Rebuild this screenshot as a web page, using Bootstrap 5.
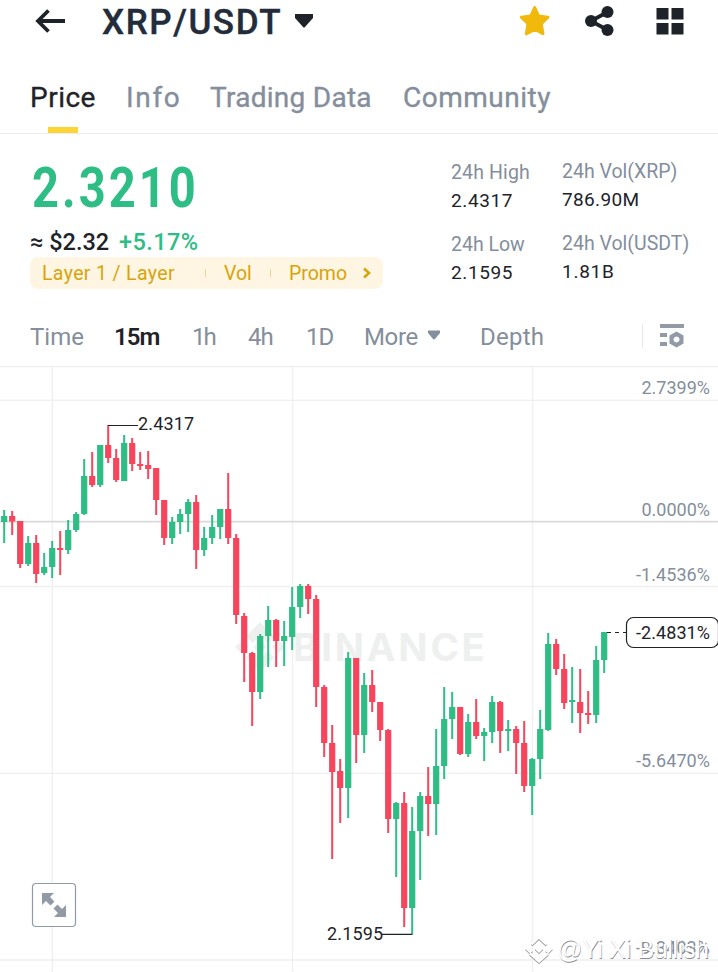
<!DOCTYPE html>
<html lang="en">
<head>
<meta charset="utf-8">
<meta name="viewport" content="width=device-width, initial-scale=1">
<title>XRP/USDT</title>
<link href="https://cdn.jsdelivr.net/npm/bootstrap@5.3.0/dist/css/bootstrap.min.css" rel="stylesheet">
<style>
body{font-family:Roboto,"Liberation Sans",sans-serif;color:#1e2329;background:#fff;overflow:hidden;width:718px}
svg{display:block}
.t{white-space:nowrap;flex:none}
.topbar{height:44px;padding-left:35px}
.pair{font-size:35px;font-weight:500;line-height:46px;width:192px;margin-left:36px;color:#232c3a;-webkit-text-stroke:.4px #232c3a}
.tabs{height:90px;padding-left:30px;border-bottom:1px solid #eaecef;font-size:28px;line-height:34px;color:#848e9c;padding-top:37px}
.tabs .t{-webkit-text-stroke:.35px}
.w1{width:96px}.w2{width:84px}.w3{width:193px}
.tabs .w1{color:#1e2329;position:relative}
.tabs .w1:after{content:"";position:absolute;left:18px;top:46px;width:30px;height:6px;background:#fcd535}
.ticker{height:174px;padding-left:30px}
.lcol{width:421px;padding-top:24px}
.last{font-size:56px;line-height:60px;font-weight:700;color:#2ebd85;padding-left:2px}
.last span{display:inline-block;transform:scaleX(.84);transform-origin:0 50%}
.sub{font-size:23.5px;line-height:30px;margin-top:9px;font-weight:500}
.up{color:#2ebd85}
.pill{width:353px;height:32px;border-radius:8px;background:#fef6e2;color:#d9a30b;font-size:19.5px;padding-left:12px}
.pill span{position:relative;top:1px}
.tick{width:1px;height:8px;background:#eed58d}
.stat{font-size:19.5px;line-height:28px}
.stat .k{color:#848e9c}
.stat .v{font-size:19px}
.c1{width:111px;padding-top:25px}.c2{padding-top:23.500px}
.ivals{height:58px;padding-left:30px;font-size:24px;color:#848e9c}
.ivals .on{font-weight:600;color:#1e2329;margin-left:-1px;margin-right:1px}
.vr1{width:1px;height:24px;background:#e3e6ea;margin-top:-3px}
.gear{margin-top:-4px}
</style>
<script src="https://cdn.jsdelivr.net/npm/bootstrap@5.3.0/dist/js/bootstrap.bundle.min.js"></script>
</head>
<body>
<header class="topbar d-flex align-items-start">
  <svg class="flex-shrink-0" width="31" height="44"><path d="M13.500 10.500 3 21 13.500 31.500M2.500 21H30" fill="none" stroke="#1e2329" stroke-width="3.800"/></svg>
  <div class="pair t"><span>XRP/USDT</span></div>
  <svg class="flex-shrink-0" width="21" height="44"><path d="M1 14H19V18L10.500 27.500H9.500L1 18Z" fill="#1e2329"/></svg>
  <svg class="flex-shrink-0" width="403" height="44">
    <path d="M219.800 7.500 223.600 16 233 17.200 226.300 23.800 228 33.800 219.800 29.300 211.300 33.800 213 23.800 206.300 17.200 215.800 16Z" fill="#f0b90b" stroke="#f0b90b" stroke-width="3" stroke-linejoin="round"/>
    <g fill="#1e2329"><path d="M292.500 12 276 21 292.500 30" fill="none" stroke="#1e2329" stroke-width="3.800"/><circle cx="292.500" cy="12" r="6"/><circle cx="276" cy="21" r="6"/><circle cx="292.500" cy="30" r="6"/>
    <path d="M341.500 8h12v11.500h-12zM356.500 8h12v11.500h-12zM341.500 23h12v11.500h-12zM356.500 23h12v11.500h-12z"/></g>
  </svg>
</header>
<nav class="tabs d-flex">
  <div class="t w1"><span>Price</span></div><div class="t w2"><span>Info</span></div><div class="t w3"><span>Trading Data</span></div><div class="t"><span>Community</span></div>
</nav>
<section class="ticker d-flex">
  <div class="lcol flex-shrink-0">
    <div class="last"><span>2.3210</span></div>
    <div class="sub d-flex"><div class="t" style="width:89px"><span>≈ $2.32</span></div><div class="t up"><span>+5.17%</span></div></div>
    <div class="pill d-flex align-items-center">
      <div class="t" style="width:163px"><span>Layer 1 / Layer</span></div><div class="tick"></div>
      <div class="t" style="width:64px;padding-left:18px"><span>Vol</span></div><div class="tick"></div>
      <div class="t" style="width:91px;padding-left:18px"><span>Promo</span></div>
      <svg width="10" height="12"><path d="M2 1.500 7 6 2 10.500" fill="none" stroke="#d9a30b" stroke-width="2.600"/></svg>
    </div>
  </div>
  <div class="stat c1 flex-shrink-0">
    <div class="k"><span>24h High</span></div><div class="v"><span>2.4317</span></div>
    <div class="k mt-3"><span>24h Low</span></div><div class="v"><span>2.1595</span></div>
  </div>
  <div class="stat c2 t">
    <div class="k"><span>24h Vol(XRP)</span></div><div class="v"><span>786.90M</span></div>
    <div class="k mt-3"><span>24h Vol(USDT)</span></div><div class="v"><span>1.81B</span></div>
  </div>
</section>
<nav class="ivals d-flex align-items-center">
  <div class="t" style="width:85px"><span>Time</span></div><div class="t on" style="width:77px"><span>15m</span></div><div class="t" style="width:56px"><span>1h</span></div><div class="t" style="width:58px"><span>4h</span></div><div class="t" style="width:58px"><span>1D</span></div><div class="t" style="width:64px"><span>More</span></div>
  <svg class="flex-shrink-0" width="52" height="16"><path d="M0 1.500H12V4L6.500 10.500H5.500L0 4Z" fill="#848e9c"/></svg>
  <div class="t" style="width:162px"><span>Depth</span></div><div class="vr1"></div>
  <svg class="gear flex-shrink-0 ms-3" width="28" height="26"><g fill="#929aa5"><path d="M1 2h24v4H1zM1 11h7v4H1zM1 20h7v4H1z"/><path fill-rule="evenodd" d="M17.500 9.500 24.500 13.500V21.500L17.500 25.500 10.500 21.500V13.500ZM17.500 14.500a3 3 0 1 0 .01 0Z"/></g></svg>
</nav>
<svg id="chart" width="718" height="606" viewBox="0 366 718 606" font-family="Roboto,sans-serif" font-size="18">
  <g stroke="#eeeff1" stroke-width="1.300"><path d="M0 366.500H718M0 400.300H718M0 586.500H718M0 773.300H718M0 960H718M52.300 366V972M292.500 366V972M532.500 366V972"/></g>
  <path d="M0 521.700H718" stroke="#d9dade" stroke-width="1.800"/>
  <g fill="#eef0f0">
    <path d="M260 622 274 636.500 267.500 643 260 635.500 252.500 643 246 636.500ZM241.500 640.500 248 647 241.500 653.500 235 647ZM260 640.500 266.500 647 260 653.500 253.500 647ZM278.500 640.500 285 647 278.500 653.500 272 647ZM246 657.500 252.500 651 260 658.500 267.500 651 274 657.500 260 672Z"/>
    <text x="293" y="661" font-family="Inter,sans-serif" font-weight="700" font-size="38.500" textLength="192">BINANCE</text>
  </g>
  <g id="candles"></g>
  <g fill="#848e9c">
    <text x="641.500" y="394" textLength="68.500">2.7399%</text><text x="641.500" y="516" textLength="68.500">0.0000%</text><text x="636" y="581" textLength="74">-1.4536%</text><text x="636" y="767" textLength="74">-5.6470%</text><text x="636" y="954" textLength="74">-9.3403%</text>
  </g>
  <g fill="none" stroke="#1e2329" stroke-width="1.200"><path d="M108 425.500H138M382 934.400H412.500"/><path d="M607 632.500H626" stroke-dasharray="4 4"/><rect x="626.500" y="617.500" width="92" height="30" rx="7" fill="#fff"/></g>
  <g fill="#1e2329"><text x="138" y="430" textLength="56">2.4317</text><text x="327" y="940" textLength="56">2.1595</text><text x="636" y="639" textLength="74">-2.4831%</text></g>
  <rect x="32.500" y="883.500" width="43" height="43" rx="3.500" fill="#fff" stroke="#929aa5" stroke-width="1.200"/>
  <path d="M42 893H54L50 897 54.500 901.500 50.500 905.500 46 901 42 905ZM66 917H54L58 913 53.500 908.500 57.500 904.500 62 909 66 905Z" fill="#929aa5"/>
  <g id="sig">
    <g fill="none" stroke="#a0a3a7" stroke-width="2.600"><path d="M531.500 945.500 539 938.500 546.500 945.500M526 949 530 953 532 951M552 949 548 953 546 951M535.500 949 539 952.500 542.500 949M530 954.500 539 962.500 548 954.500"/></g>
    <g fill="none" stroke="#fff" stroke-width="2.200"><path d="M531.500 944.500 539 937.500 546.500 944.500M526 948 530 952 532 950M552 948 548 952 546 950M535.500 948 539 951.500 542.500 948M530 953.500 539 961.500 548 953.500"/></g>
    <g font-family="Liberation Sans,sans-serif" font-size="25"><text x="557.600" y="958.700" textLength="152" fill="#8b8e93">@Yi Xi Bullish</text><text x="557" y="958" textLength="152" fill="#fff">@Yi Xi Bullish</text></g>
  </g>
</svg>
<script>
// direction, high, body top, body bottom, low
const rows=`g510,516,522,543 r511,516,521.5,535 r521,521,564,568 g536,543,564,566 r535,543,574,583 g553,567,573,575 g541,548,567,578 r531,548,550,575 g520,530,550,554 g512,514,530,532 g459,476,514,515 r452,476,485,487 g445,445,485,487 r425,445,458,463 r449,458,480,482 g435,443,481,481 r438,443,464,471 r452,464,466,470 r451,465,469,479 r468,468,500,515 r500,500,538,545 g517,522,538,544 g509,514,522,534 g499,502,514,532 r495,502,550,569 g527,538,550,556 g515,527,538,544 g509,509,527,539 r473,509,538,544 r534,538,615,624 r613,616,653,682 r652,653,692,726 g634,636,692,699 g606,620,636,667 r619,620,641,667 g621,636,641,666 g587,607,637,650 g584,586,607,618 r584,586,599,614 r595,599,687,707 r685,687,743,757 r725,743,772,859 r759,771,788,823 g652,658,788,818 r658,658,735,763 g673,685,735,753 r670,685,702,712 r702,702,730,741 r729,730,819,833 g802,803,819,877 r792,803,908,927 g807,831,908,934 g792,796,831,880 r767,796,804,836 g729,766,804,835 g687,719,766,779 g692,707,719,739 r707,707,754,755 g714,722,754,757 r699,722,736,739 g728,732,736,761 g696,702,732,743 r701,702,731,753 g720,729,731,751 r726,729,743,774 r721,743,786,792 g758,759,786,815 g710,729,759,779 g633,644,730,731 r639,644,669,675 r654,669,703,709 g667,700,702,723 r669,702,713,733 r691,713,715,724 g646,660,715,723 g632,632,660,673`.split(' ');
document.getElementById('candles').innerHTML=rows.map((s,i)=>{
  const [h,a,b,l]=s.slice(1).split(',').map(Number),x=4.2+8*i,c=s[0]==='g'?'#2ebd85':'#f6465d';
  return `<path fill="${c}" d="M${x-1} ${h}h2V${l}h-2zM${x-3.1} ${a}h6.200V${b}h-6.200z"/>`;
}).join('');
// Letter spacing that gives each label its design width
const widths={'XRP/USDT':179,'Price':65,'Info':54,'Trading Data':162,'Community':147,'2.3210':195,'≈ $2.32':79,'+5.17%':79,'Layer 1 / Layer':133,'Vol':28,'Promo':58,'24h High':79,'24h Low':74,'24h Vol(XRP)':115,'24h Vol(USDT)':127,'2.4317':61,'2.1595':61,'786.90M':77,'1.81B':52,'Time':54,'15m':46,'1h':25,'4h':26,'1D':28,'More':54,'Depth':64};
document.querySelectorAll('span').forEach(e=>{
  const w=widths[e.textContent];
  if(w)e.style.letterSpacing=(w-e.offsetWidth)/(e.textContent.length-1)+'px';
});
</script>
</body>
</html>
